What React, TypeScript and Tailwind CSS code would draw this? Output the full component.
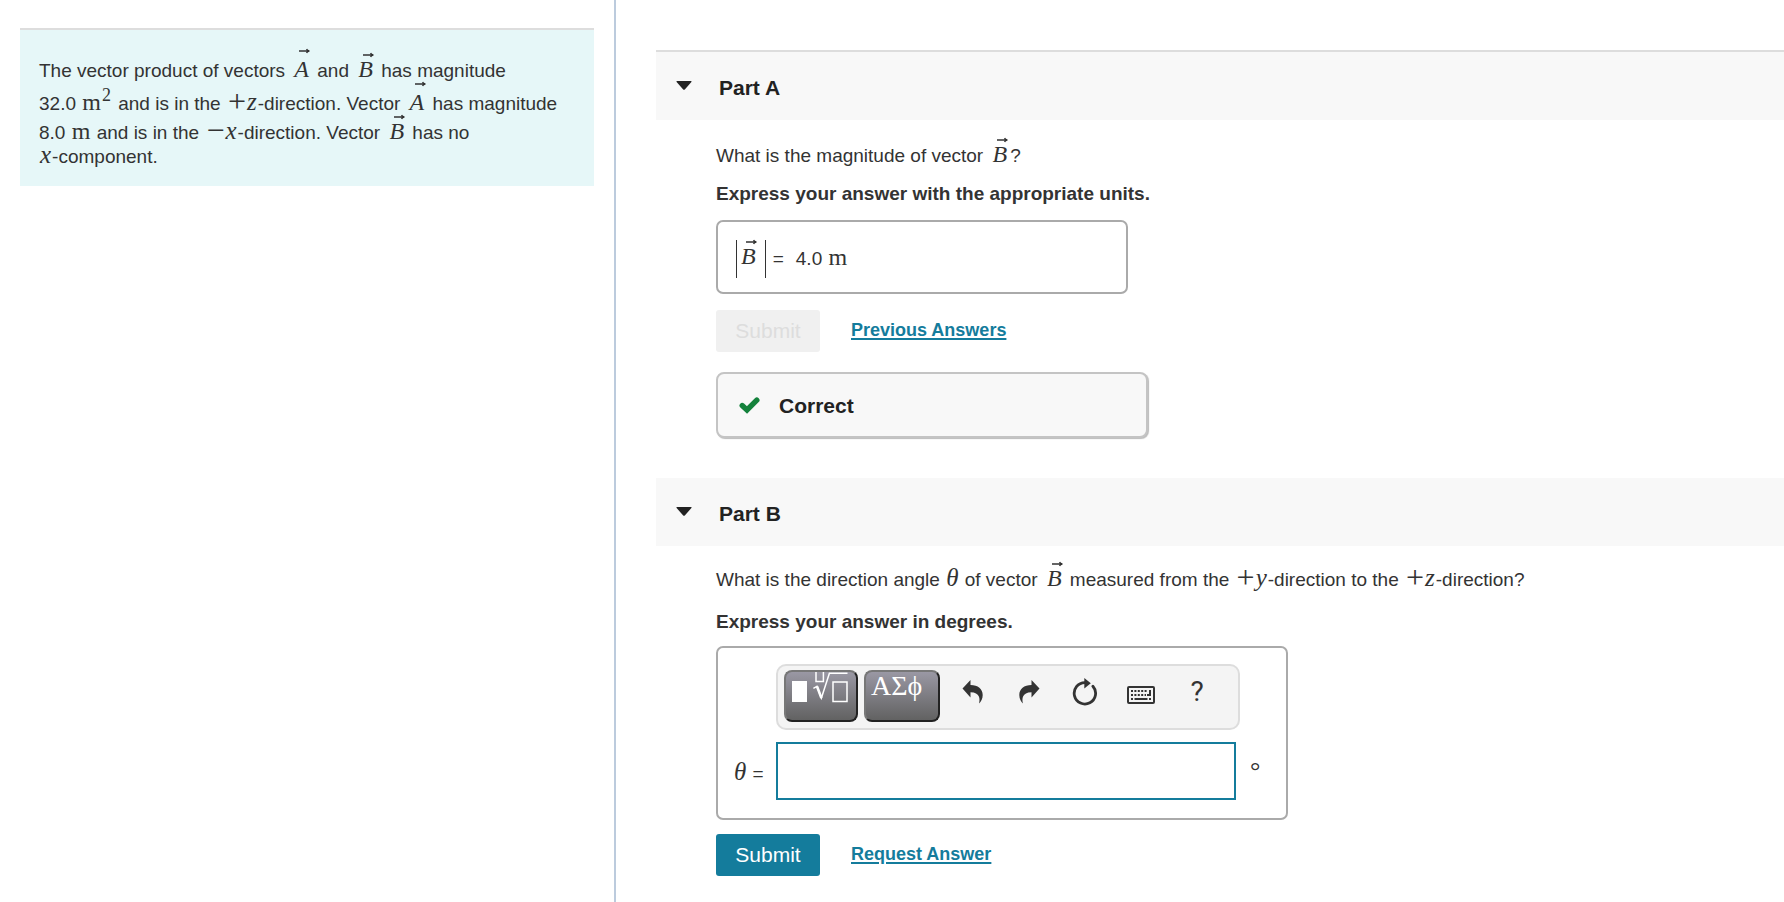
import { useState } from "react";
import type { ReactNode } from "react";

const Arrow = ({ className }: { className: string }) => (
  <svg viewBox="0 0 11 6" className={className} aria-hidden="true">
    <path d="M0 3H10M7.6 1C8 2.2 9 2.8 10.4 3C9 3.2 8 3.8 7.6 5" fill="none" stroke="currentColor" strokeWidth="1.3" />
  </svg>
);

// Vector symbol with an arrow over the letter
const Vec = ({ name }: { name: "A" | "B" }) => (
  <span
    className={`relative ml-1 inline-block pr-[3px] font-['Liberation_Serif',serif] text-[24px] leading-5 italic ${
      name === "A" ? "pt-[9px]" : "pt-[5px]"
    }`}
  >
    <Arrow className="absolute -top-0.5 left-[5px] h-1.5 w-[11px]" />
    {name}
  </span>
);

const Sym = ({ children }: { children: ReactNode }) => (
  <span className="mx-px font-['Liberation_Serif',serif] text-[25px] leading-5 italic">{children}</span>
);

const Unit = ({ children }: { children: ReactNode }) => (
  <span className="mx-px font-['Liberation_Serif',serif] text-[24px] leading-5">{children}</span>
);

const Sign = ({ children }: { children: ReactNode }) => (
  <span className="ml-0.5 font-['Liberation_Serif',serif] text-[32px] leading-4 align-[-2px]">{children}</span>
);

const PartHeader = ({ title, open, onToggle }: { title: string; open: boolean; onToggle: () => void }) => (
  <h2 className="bg-[#f8f8f8]">
    <button
      type="button"
      aria-expanded={open}
      onClick={onToggle}
      className="flex h-[68px] w-full items-center gap-[27px] pl-5 text-left text-[21px] font-bold text-[#222]"
    >
      <svg viewBox="0 0 16 9" className="mb-0.5 h-[9px] w-4" aria-hidden="true">
        <path d="M1 0H15Q16 0.3 15.4 1L8.8 8.4Q8 9 7.2 8.4L0.6 1Q0 0.3 1 0Z" fill="currentColor" />
      </svg>
      <span className="pt-1">{title}</span>
    </button>
  </h2>
);

const iconButton = "flex h-7 w-7 items-center justify-center text-[#333]";
const paletteButton =
  "h-[52px] rounded-lg border-2 border-t-[#777] border-r-[#222] border-b-[#222] border-l-[#777] bg-linear-to-b from-[#9a98a4] to-[#626262] text-white";

const Toolbar = () => (
  <div className="flex h-[66px] w-[464px] items-start rounded-[10px] border-2 border-[#ddd] bg-[#f4f4f4] pt-1 pl-1.5">
    <button type="button" aria-label="Templates" className={`${paletteButton} w-[74px]`}>
      <svg viewBox="0 0 70 48" className="h-12 w-[70px]" aria-hidden="true">
        <path d="M6 9H21V30H6Z" fill="white" />
        <path d="M30 0V9.4H37.4V0M47 10H61V29.4H47Z" fill="none" stroke="white" strokeWidth="1.5" />
        <path d="M27.4 16.4L31 14.4L35.4 26L43.4 1.2H61.5" fill="none" stroke="white" strokeWidth="1.5" />
        <path d="M31 14.4L35.4 26" stroke="white" strokeWidth="2.6" />
      </svg>
    </button>
    <button
      type="button"
      aria-label="Symbols"
      className={`${paletteButton} ml-1.5 flex w-[76px] items-start pl-[5px] font-['Liberation_Serif',serif] text-[28px] leading-7`}
    >
      ΑΣϕ
    </button>
    <div className="flex gap-7 pt-2 pl-[19px]">
      <button type="button" aria-label="Undo" className={iconButton}>
        <svg viewBox="0 0 22 24" className="h-6 w-[22px]">
          <path d="M0.5 8.5L8.5 0V5C16 5 20.7 9 20.7 15C20.7 19 19 21.5 17 23.5C18.2 19 18 12.2 8.5 12.2V17.5Z" fill="currentColor" />
        </svg>
      </button>
      <button type="button" aria-label="Redo" className={iconButton}>
        <svg viewBox="0 0 22 24" className="h-6 w-[22px]">
          <path d="M21.5 8.5L13.5 0V5C6 5 1.3 9 1.3 15C1.3 19 3 21.5 5 23.5C3.8 19 4 12.2 13.5 12.2V17.5Z" fill="currentColor" />
        </svg>
      </button>
      <button type="button" aria-label="Reset" className={iconButton}>
        <svg viewBox="0 0 26 28" className="h-7 w-[26px]">
          <path
            d="M12.9 4.6A10.7 10.7 0 1 0 20.9 8.2"
            fill="none"
            stroke="currentColor"
            strokeWidth="2.8"
            strokeLinecap="round"
          />
          <path d="M12.3 0L18.8 5.2L12.3 10.4Z" fill="currentColor" />
        </svg>
      </button>
      <button type="button" aria-label="Keyboard" className={iconButton}>
        <svg viewBox="0 0 28 18" className="mt-1.5 h-[18px] w-7">
          <rect x="1" y="1" width="26" height="16" rx="1" fill="none" stroke="currentColor" strokeWidth="2" />
          <path d="M4 5H21M4 9H19" stroke="currentColor" strokeWidth="2" strokeDasharray="2 1.4" />
          <path d="M4 13H6M7.5 13H20.5M22 13H24M23 4V10M20 9H24" fill="none" stroke="currentColor" strokeWidth="2" />
        </svg>
      </button>
      <button type="button" aria-label="Help" className={`${iconButton} font-[Roboto,sans-serif] text-[28px]`}>
        ?
      </button>
    </div>
  </div>
);

const linkClass = "pb-0.5 text-[18px] leading-5 font-bold text-[#147c9c] underline decoration-2 underline-offset-2";
const submitClass = "h-[42px] w-[104px] rounded-[3px] text-[21px]";

export default function App() {
  const [openA, setOpenA] = useState(true);
  const [openB, setOpenB] = useState(true);
  const [theta, setTheta] = useState("");

  return (
    <div className="flex min-h-screen bg-white font-['Liberation_Sans',Arial,sans-serif] text-[19px] leading-6 text-[#333]">
      <aside className="w-[616px] shrink-0 border-r-2 border-[#bccbdd] pt-7 pr-5 pl-5">
        <p className="border-t-2 border-[#ddd] bg-[#e6f7f8] px-[19px] pt-5 pb-[17px]">
          The vector product of vectors <Vec name="A" /> and <Vec name="B" /> has magnitude
          <br />
          32.0 <Unit>m</Unit>
          <sup className="mr-0.5 font-['Liberation_Serif',serif] text-[18px] leading-none">2</sup> and is in the{" "}
          <Sign>+</Sign>
          <Sym>z</Sym>-direction. Vector <Vec name="A" /> has magnitude
          <br />
          8.0 <Unit>m</Unit> and is in the <Sign>−</Sign>
          <Sym>x</Sym>-direction. Vector <Vec name="B" /> has no
          <br />
          <Sym>x</Sym>-component.
        </p>
      </aside>

      <main className="min-w-0 flex-1 pt-[50px] pl-10">
        <section className="border-t-2 border-[#ddd]">
          <PartHeader title="Part A" open={openA} onToggle={() => setOpenA(!openA)} />
          {openA && (
            <div className="pt-[19px] pb-10 pl-[60px]">
              <p>
                What is the magnitude of vector <Vec name="B" />?
              </p>
              <p className="mt-3.5 font-bold">Express your answer with the appropriate units.</p>
              <div className="mt-3.5 flex h-[74px] w-[412px] items-center rounded-[7px] border-2 border-[#aaa] pl-[18px]">
                <span className="mt-1 flex h-[38px] items-center border-x border-[#333] pr-1.5 pb-3">
                  <Vec name="B" />
                </span>
                <span className="mt-1 ml-[7px]">=</span>
                <span className="mt-1 ml-3">
                  4.0 <Unit>m</Unit>
                </span>
              </div>
              <div className="mt-4 flex items-center gap-[31px]">
                <button type="button" disabled className={`${submitClass} bg-[#f0f0f0] text-[#ddd]`}>
                  Submit
                </button>
                <a href="#previous-answers" className={linkClass}>
                  Previous Answers
                </a>
              </div>
              <div className="mt-5 flex h-[66px] w-[432px] items-center gap-[18px] rounded-lg border-2 border-[#c4c4c4] bg-[#f8f8f8] pl-[21px] text-[21px] font-bold text-[#222] shadow-[1px_1px_1px_#bbb]">
                <svg viewBox="0 0 22 17" className="h-[17px] w-[22px]" aria-hidden="true">
                  <path
                    d="M3.2 8.5L8 13L17.8 3.2"
                    fill="none"
                    stroke="#14823c"
                    strokeWidth="5.4"
                    strokeLinecap="round"
                  />
                </svg>
                <span className="pt-0.5">Correct</span>
              </div>
            </div>
          )}
        </section>

        <section>
          <PartHeader title="Part B" open={openB} onToggle={() => setOpenB(!openB)} />
          {openB && (
            <div className="pt-[17px] pb-6 pl-[60px]">
              <p>
                What is the direction angle <Sym>θ</Sym> of vector <Vec name="B" /> measured from the <Sign>+</Sign>
                <Sym>y</Sym>-direction to the <Sign>+</Sign>
                <Sym>z</Sym>-direction?
              </p>
              <p className="mt-[18px] font-bold">Express your answer in degrees.</p>
              <div className="mt-3 h-[174px] w-[572px] rounded-[7px] border-2 border-[#aaa] pt-4 pl-[15px]">
                <div className="pl-[43px]">
                  <Toolbar />
                </div>
                <div className="mt-3 flex items-center">
                  <label htmlFor="theta" className="w-[43px] pt-1.5">
                    <Sym>θ</Sym> =
                  </label>
                  <input
                    id="theta"
                    type="text"
                    value={theta}
                    onChange={(e) => setTheta(e.target.value)}
                    className="h-[58px] w-[460px] border-2 border-[#147c9c] bg-white px-2 outline-none"
                  />
                  <span className="ml-3.5 font-['Liberation_Serif',serif] text-[26px]">°</span>
                </div>
              </div>
              <div className="mt-3.5 flex items-center gap-[31px]">
                <button type="button" className={`${submitClass} bg-[#147c9c] text-white`}>
                  Submit
                </button>
                <a href="#request-answer" className={linkClass}>
                  Request Answer
                </a>
              </div>
            </div>
          )}
        </section>
      </main>
    </div>
  );
}
